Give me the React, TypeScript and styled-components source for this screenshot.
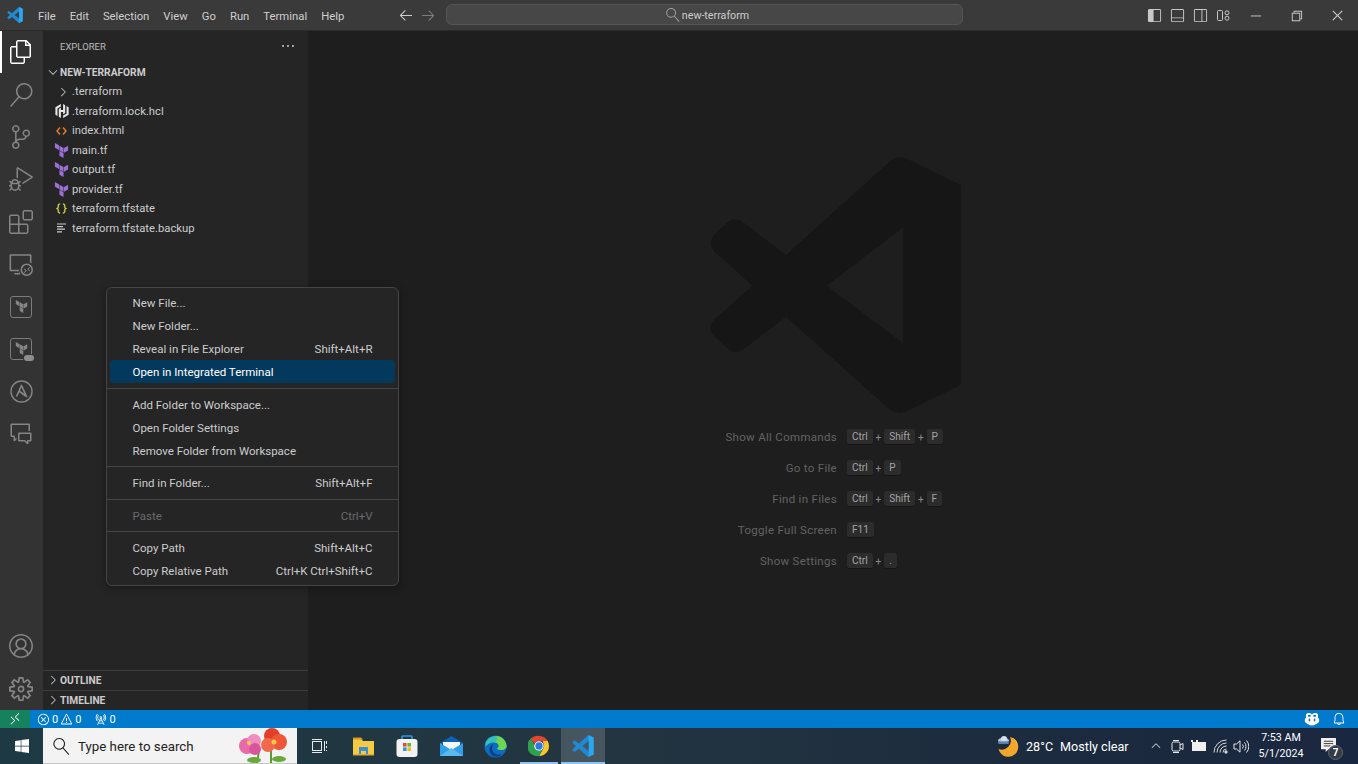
import React from "react";
import styled, { createGlobalStyle } from "styled-components";
import {
  VscFiles, VscSearch, VscSourceControl, VscDebugAlt, VscExtensions, VscRemoteExplorer,
  VscAccount, VscSettingsGear, VscChevronRight, VscChevronDown, VscEllipsis, VscCommentDiscussion,
  VscError, VscWarning, VscRadioTower, VscRemote, VscBell, VscArrowLeft, VscArrowRight,
  VscLayoutSidebarLeft, VscLayoutPanelOff, VscLayoutSidebarRightOff, VscChromeMinimize,
  VscChromeRestore, VscChromeClose, VscJson,
} from "react-icons/vsc";
import { SiTerraform, SiHashicorp } from "react-icons/si";
import { FaWindows } from "react-icons/fa";

const UI = `Roboto, "Noto Sans", sans-serif`;

const Global = createGlobalStyle`
  html, body { margin: 0; height: 100%; background: #1e1e1e; overflow: hidden; }
  * { box-sizing: border-box; }
  #root { height: 100%; }
`;

const Shell = styled.div`
  position: relative;
  width: 1358px;
  height: 764px;
  display: grid;
  grid-template-rows: 31px 679px 18px 36px;
  font-family: ${UI};
  font-size: 11.5px;
  overflow: hidden;
`;

/* ---------- title bar ---------- */
const TitleBar = styled.header`
  display: flex;
  align-items: center;
  background: #3a3a3a;
  border-bottom: 1px solid #2b2b2b;
  color: #cccccc;
`;
const LogoSlot = styled.div`
  width: 38px;
  display: flex;
  justify-content: center;
  padding-right: 8px;
`;
const MenuBar = styled.nav`
  display: flex;
  gap: 14px;
  width: 360px;
  padding-top: 2px;
  font-size: 11.3px;
`;
const MenuLabel = styled.span`
  color: #cfcfcf;
`;
const NavArrows = styled.div`
  display: flex;
  gap: 6px;
  width: 48px;
`;
const NavArrow = styled.span<{ $dim?: boolean }>`
  display: flex;
  font-size: 16px;
  color: ${(p) => (p.$dim ? "#7d7d7d" : "#cccccc")};
`;
const CommandCenter = styled.div`
  width: 517px;
  height: 21px;
  margin-top: -1px;
  padding: 1px 0 0 6px;
  display: flex;
  align-items: center;
  justify-content: center;
  gap: 2px;
  border: 1px solid #555555;
  border-radius: 6px;
  background: #474747;
  font-size: 10.7px;
  color: #cccccc;
  svg { font-size: 14px; color: #a8a8a8; transform: scaleX(-1); }
`;
const TitleActions = styled.div`
  display: flex;
  align-items: center;
  margin-left: auto;
`;
const LayoutBtn = styled.span`
  width: 23px;
  display: flex;
  justify-content: center;
  font-size: 15px;
  color: #c8c8c8;
`;
const WinBtn = styled.span`
  width: 41px;
  display: flex;
  justify-content: center;
  font-size: 15px;
  color: #c8c8c8;
`;
const LayoutGroup = styled.div`
  display: flex;
`;

/* ---------- main ---------- */
const Main = styled.div`
  display: grid;
  grid-template-columns: 43px 265px 1fr;
  min-height: 0;
`;
const ActivityBar = styled.aside`
  display: flex;
  flex-direction: column;
  background: #333333;
`;
const ActivityItem = styled.div<{ $active?: boolean }>`
  height: 42.4px;
  flex: none;
  display: flex;
  align-items: center;
  justify-content: center;
  font-size: 24px;
  padding-right: 3px;
  color: ${(p) => (p.$active ? "#ffffff" : "#858585")};
  border-left: 2px solid ${(p) => (p.$active ? "#ffffff" : "transparent")};
`;
const ActivitySpacer = styled.div`
  flex: 1;
`;
const TerraformBox = styled.div`
  position: relative;
  width: 22px;
  height: 22px;
  display: flex;
  align-items: center;
  justify-content: center;
  border: 1.5px solid #7c7c7c;
  border-radius: 3px;
  font-size: 13px;
`;
const CloudBadge = styled.span`
  position: absolute;
  right: -3px;
  bottom: -2px;
  width: 10px;
  height: 6px;
  border-radius: 4px;
  background: #8e8e8e;
  box-shadow: 0 0 0 1px #333333;
`;

const SideBar = styled.aside`
  display: flex;
  flex-direction: column;
  background: #252526;
  color: #cccccc;
`;
const SideHeader = styled.div`
  height: 30.5px;
  flex: none;
  display: flex;
  align-items: center;
  justify-content: space-between;
  padding: 0 12px 0 17px;
  font-size: 9.5px;
  color: #bbbbbb;
  svg { font-size: 16px; color: #cccccc; }
`;
const FolderRow = styled.div`
  height: 20px;
  flex: none;
  display: flex;
  align-items: center;
  padding: 1px 0 0 3px;
  font-size: 10.2px;
  font-weight: 700;
  svg { font-size: 14px; }
`;
const FileRow = styled.div`
  height: 19.5px;
  flex: none;
  display: flex;
  align-items: center;
  padding: 1px 0 0 8px;
  font-size: 11.25px;
`;
const FileGlyph = styled.span<{ $color: string; $nudge?: boolean }>`
  width: 21px;
  flex: none;
  display: flex;
  justify-content: center;
  color: ${(p) => p.$color};
  padding-left: ${(p) => (p.$nudge ? "3px" : "0")};
`;
const SideSpacer = styled.div`
  flex: 1;
`;
const SectionHeader = styled.div`
  height: 20px;
  flex: none;
  display: flex;
  align-items: center;
  padding: 0 0 1px 3px;
  border-top: 1px solid #3c3c3c;
  font-size: 10.2px;
  font-weight: 700;
  svg { font-size: 14px; }
`;

/* ---------- editor ---------- */
const Editor = styled.main`
  background: #1e1e1e;
  display: flex;
  flex-direction: column;
  padding: 119px 0 0 392px;
`;
const WatermarkLogo = styled.svg`
  width: 270px;
  height: 270px;
  display: block;
  flex: none;
`;
const Shortcuts = styled.div`
  display: grid;
  grid-template-columns: 137px auto;
  grid-auto-rows: 31px;
  column-gap: 10px;
  margin-top: 1.5px;
  justify-content: start;
`;
const ShortcutLabel = styled.div`
  display: flex;
  align-items: center;
  justify-content: flex-end;
  color: #636363;
  letter-spacing: 0.3px;
  white-space: nowrap;
`;
const Keys = styled.div`
  display: flex;
  align-items: center;
  gap: 3px;
  color: #8a8a8a;
  font-size: 10px;
`;
const KeyCap = styled.span`
  height: 16px;
  display: inline-flex;
  align-items: center;
  justify-content: center;
  padding: 0 5px;
  border-radius: 3px;
  background: #2c2c2c;
  border-bottom: 1px solid #151515;
  color: #a6a6a6;
  font-size: 10px;
`;

/* ---------- context menu ---------- */
const ContextMenu = styled.div`
  position: absolute;
  left: 106px;
  top: 287px;
  width: 293px;
  padding: 3px;
  background: #252526;
  border: 1px solid #454545;
  border-radius: 6px;
  box-shadow: 0 2px 8px rgba(0, 0, 0, 0.36);
  color: #cccccc;
`;
const MenuItem = styled.div<{ $active?: boolean; $disabled?: boolean }>`
  height: 23px;
  display: flex;
  align-items: center;
  justify-content: space-between;
  padding: 1px 22.5px 0;
  border-radius: 4px;
  background: ${(p) => (p.$active ? "#04395e" : "transparent")};
  color: ${(p) => (p.$active ? "#ffffff" : p.$disabled ? "#6a6a6a" : "#cccccc")};
`;
const MenuSeparator = styled.div`
  height: 1px;
  margin: 4.6px -3px 4px;
  background: #454545;
`;

/* ---------- status bar ---------- */
const StatusBar = styled.footer`
  display: flex;
  align-items: center;
  background: #007acc;
  color: #ffffff;
  font-size: 11px;
`;
const RemoteSlot = styled.div`
  width: 30px;
  height: 100%;
  display: flex;
  align-items: center;
  justify-content: center;
  background: #16825d;
  font-size: 14px;
`;
const StatusGroup = styled.div`
  display: flex;
  align-items: center;
  gap: 2px;
  margin-left: 7px;
  svg { font-size: 13px; }
  & + & { margin-left: 13px; }
`;
const StatusCount = styled.span`
  margin-right: 0;
`;
const StatusRight = styled.div`
  display: flex;
  align-items: center;
  gap: 12px;
  margin-left: auto;
  padding-right: 12px;
  svg { font-size: 14px; }
`;

/* ---------- taskbar ---------- */
const Taskbar = styled.div`
  display: flex;
  align-items: stretch;
  background: linear-gradient(90deg, #1d3a44 0%, #233541 45%, #1c2b3e 75%, #1a2740 100%);
  color: #ffffff;
`;
const StartBtn = styled.div`
  width: 43px;
  display: flex;
  align-items: center;
  justify-content: center;
  font-size: 16px;
`;
const SearchBox = styled.div`
  position: relative;
  width: 254px;
  display: flex;
  align-items: center;
  gap: 8px;
  padding: 1px 0 0 10px;
  background: #f3f3f3;
  border-bottom: 1px solid #c8c8c8;
  color: #222222;
  font-size: 13.3px;
  overflow: hidden;
  > svg:first-child { font-size: 17px; transform: scaleX(-1); }
`;
const Flowers = styled.svg`
  position: absolute;
  right: 8px;
  top: 0;
`;
const TaskBtn = styled.div<{ $active?: boolean; $open?: boolean }>`
  position: relative;
  width: 44px;
  display: flex;
  align-items: center;
  justify-content: center;
  background: ${(p) => (p.$active ? "rgba(255,255,255,0.16)" : "transparent")};
  &::after {
    content: "";
    display: ${(p) => (p.$open ? "block" : "none")};
    position: absolute;
    left: ${(p) => (p.$active ? "0" : "3px")};
    right: ${(p) => (p.$active ? "0" : "3px")};
    bottom: 0;
    height: 2px;
    background: #8ec4f0;
  }
`;
const Tray = styled.div`
  margin-left: auto;
  display: flex;
  align-items: center;
`;
const WeatherText = styled.div`
  display: flex;
  gap: 7px;
  margin: 0 17px 0 7px;
  font-size: 12.6px;
  white-space: nowrap;
`;
const TrayIcon = styled.span`
  width: 21.3px;
  display: flex;
  justify-content: center;
  font-size: 14px;
  color: #e8e8e8;
`;
const Clock = styled.div`
  width: 58px;
  text-align: center;
  font-size: 10.7px;
  line-height: 16.5px;
`;
const Notify = styled.div`
  position: relative;
  width: 48px;
  height: 100%;
  display: flex;
  align-items: center;
  justify-content: center;
  padding: 0 12px 3px 0;
`;
const NotifyBadge = styled.span`
  position: absolute;
  left: 18px;
  top: 17px;
  width: 15px;
  height: 15px;
  border-radius: 50%;
  display: flex;
  align-items: center;
  justify-content: center;
  background: #333b45;
  border: 1px solid #5f6670;
  font-size: 10px;
  font-weight: 700;
`;

/* ---------- drawings ---------- */
const VS_OUTER =
  "M565 38 Q595 10 628 30 L782 105 L782 705 L628 780 Q595 800 565 775 L258 500 L130 598 Q105 615 85 598 L42 557 Q22 535 42 510 L157 407 L42 303 Q22 280 42 255 L85 215 Q105 198 130 217 L258 315 Z M610 232 L380 407 L610 580 Z";

const VsLogo = ({ size }: { size: number }) => (
  <svg width={size} height={size} viewBox="20 15 770 780">
    <path fillRule="evenodd" d={VS_OUTER} fill="#1f8ad2" />
    <path d="M595 22 Q612 20 628 30 L782 105 L782 705 L628 780 Q612 790 595 790 L610 580 L610 232 Z" fill="#2aa7ef" />
  </svg>
);

const TerraIcon = () => <SiTerraform size={15} />;

const HtmlIcon = () => (
  <svg width="11" height="10" viewBox="0 0 11 10" fill="none" stroke="currentColor" strokeWidth="1.5">
    <path d="M4 1.5 L1 5 L4 8.5M7 1.5 L10 5 L7 8.5" />
  </svg>
);
const LinesIcon = () => (
  <svg width="11" height="10" viewBox="0 0 11 10" fill="none" stroke="currentColor" strokeWidth="1.2">
    <path d="M1 1h9M1 3.6h6M1 6.2h8M1 8.8h5" />
  </svg>
);
const CustomLayoutIcon = () => (
  <svg width="15" height="15" viewBox="0 0 15 15" fill="none" stroke="currentColor" strokeWidth="1">
    <rect x="1.5" y="2.5" width="5" height="10" rx="1" />
    <circle cx="11" cy="4.8" r="2" />
    <circle cx="11" cy="10.2" r="2" />
  </svg>
);
const AnsibleIcon = () => (
  <svg width="23" height="23" viewBox="0 0 23 23" fill="none" stroke="currentColor">
    <circle cx="11.5" cy="11.5" r="10.5" strokeWidth="1.4" />
    <path d="M6.5 16.5 L11.5 5.5 L16.5 16.5 L9 11" strokeWidth="1.7" strokeLinejoin="round" />
  </svg>
);

const TaskView = () => (
  <svg width="17" height="16" viewBox="0 0 17 16" fill="none" stroke="#e8e8e8" strokeWidth="1">
    <rect x="1.5" y="3.5" width="9" height="9" />
    <path d="M1 1.5h10M1 14.5h10M13.5 3v10" />
    <path d="M15.5 3v3M15.5 8v2M15.5 12v1" />
  </svg>
);
const FolderIcon = () => (
  <svg width="21" height="19" viewBox="0 0 21 19">
    <path d="M0 2h8l2 2h11v14H0z" fill="#f6c944" />
    <path d="M0 0.5h8l2 2H0z" fill="#d99a1e" />
    <path d="M6 10h9v8H13v-4H8v4H6z" fill="#3a8fd6" />
    <path d="M0 17h21v1.5H0z" fill="#e2a92c" />
  </svg>
);
const StoreIcon = () => (
  <svg width="22" height="23" viewBox="0 0 22 23">
    <path d="M6 5V2a1 1 0 0 1 1-1h8a1 1 0 0 1 1 1v3" fill="none" stroke="#2b9be8" strokeWidth="1.6" />
    <rect x="0.5" y="4" width="21" height="18" rx="3" fill="#f2f2f2" />
    <rect x="7" y="8" width="3.6" height="3.6" fill="#e8502a" />
    <rect x="11.4" y="8" width="3.6" height="3.6" fill="#6fb52c" />
    <rect x="7" y="12.4" width="3.6" height="3.6" fill="#2b9be8" />
    <rect x="11.4" y="12.4" width="3.6" height="3.6" fill="#f4b81a" />
  </svg>
);
const MailIcon = () => (
  <svg width="23" height="20" viewBox="0 0 23 20">
    <path d="M0 7 L11.5 0 L23 7 L11.5 13z" fill="#0b62b5" />
    <path d="M3 6h17v8H3z" fill="#f4f6f8" />
    <path d="M0 7 L11.5 14 L23 7 V20 H0z" fill="#2f9fe9" />
    <path d="M0 20 L11.5 12 L23 20z" fill="#5bb9f2" />
  </svg>
);
const EdgeIcon = () => (
  <svg width="23" height="23" viewBox="0 0 23 23">
    <circle cx="11.5" cy="11.5" r="11" fill="#0d6cc0" />
    <path d="M1.5 8 C4 1 14 -1.5 19.5 4 C22 6.5 23 10 22.5 12.5 C20 16 14 15.5 13 13.5 C16 12 15 8 11 7.5 C7 7 3.5 8.5 1.5 12z" fill="#35c1b4" />
    <path d="M12 1 C17 1 22 5 22.5 11.5 C22 15 15 16 13 13.5 C16 12 15.5 8 11 7.5 C15 4 13 2 12 1z" fill="#71d54e" />
    <path d="M8 13 C8 18 13 21 18 19 C14 23.5 6 22 5.5 15 C5.5 12 7 9.5 10 9 C8.5 10 8 11.5 8 13z" fill="#0a3f86" />
  </svg>
);
const ChromeIcon = () => (
  <svg width="22" height="22" viewBox="0 0 24 24">
    <path d="M12 1a11 11 0 0 1 9.5 5.5H12a5.5 5.5 0 0 0-5 3.2L3 3.8A11 11 0 0 1 12 1z" fill="#e2462f" />
    <path d="M21.5 6.5A11 11 0 0 1 12 23l4.7-8.3a5.5 5.5 0 0 0 .1-5.7L16 6.5z" fill="#fbc52d" />
    <path d="M3 3.8l4.9 8.6a5.5 5.5 0 0 0 8.8 2.3L12 23A11 11 0 0 1 3 3.8z" fill="#2fa04e" />
    <circle cx="12" cy="12" r="5.2" fill="#fff" />
    <circle cx="12" cy="12" r="4" fill="#2a78e4" />
  </svg>
);
const WeatherIcon = () => (
  <svg width="22" height="22" viewBox="0 0 22 22">
    <path d="M13 2 A10 10 0 1 1 1.5 14 A9 9 0 0 0 13 2z" fill="#f2a62b" />
    <path d="M13 2 A10 10 0 0 1 19 16 A9 9 0 0 0 13 2z" fill="#f8c44a" />
    <ellipse cx="6.5" cy="5.5" rx="5.5" ry="2.8" fill="#b5c8dc" />
    <ellipse cx="7" cy="3.5" rx="3" ry="2.6" fill="#d5e1ec" />
    <rect x="1" y="6.5" width="11" height="2.4" rx="1.2" fill="#5a7fa8" />
  </svg>
);
const MeetIcon = () => (
  <svg width="15" height="15" viewBox="0 0 15 15" fill="none" stroke="#e8e8e8" strokeWidth="1">
    <rect x="2" y="3" width="8" height="9" rx="1.5" />
    <path d="M10 6l3-1.5v6L10 9M3 1.5h6M3 13.5h6" />
  </svg>
);
const BatteryIcon = () => (
  <svg width="16" height="12" viewBox="0 0 16 12">
    <rect x="1.5" y="2.5" width="13" height="8" fill="#efefef" stroke="#efefef" />
    <rect x="0" y="0" width="2" height="2" fill="#efefef" />
    <rect x="5" y="0" width="2" height="2" fill="#efefef" />
  </svg>
);
const WifiIcon = () => (
  <svg width="15" height="15" viewBox="0 0 15 15" fill="none" stroke="#d8d8d8" strokeWidth="1">
    <path d="M1 13.5A12.5 12.5 0 0 1 13.5 1M4 13.5A9.5 9.5 0 0 1 13.5 4M7 13.5A6.5 6.5 0 0 1 13.5 7M10 13.5A3.5 3.5 0 0 1 13.5 10" />
    <circle cx="13" cy="13" r="1.2" fill="#d8d8d8" />
  </svg>
);
const VolumeIcon = () => (
  <svg width="16" height="15" viewBox="0 0 16 15" fill="none" stroke="#e8e8e8" strokeWidth="1">
    <path d="M1 5h2.5L7 1.8v11.4L3.5 10H1z" />
    <path d="M9.5 5.5a3 3 0 0 1 0 4M11.5 3.5a6 6 0 0 1 0 8M13.5 1.5a9 9 0 0 1 0 12" />
  </svg>
);
const NoteIcon = () => (
  <svg width="15" height="14" viewBox="0 0 16 15">
    <path d="M0 0h16v12H8l-3 3v-3H0z" fill="#f2f2f2" />
    <path d="M3 3.5h10M3 6h10M3 8.5h7" stroke="#333" strokeWidth="1" />
  </svg>
);
const CopilotIcon = () => (
  <svg width="16" height="14" viewBox="0 0 16 14">
    <path d="M8 2.5C7 .5 3 .3 2.2 2.2 1.7 3.4 2 5 2.4 5.6 1.2 6 .8 7 .8 8.2c0 1 .3 2 1 2.6C3.4 12.2 5.6 13.4 8 13.4s4.6-1.2 6.2-2.6c.7-.6 1-1.6 1-2.6 0-1.2-.4-2.2-1.6-2.6.4-.6.7-2.2.2-3.4C13 .3 9 .5 8 2.5z" fill="#fff" />
    <rect x="4.6" y="6.6" width="1.6" height="3" rx=".8" fill="#007acc" />
    <rect x="9.8" y="6.6" width="1.6" height="3" rx=".8" fill="#007acc" />
    <path d="M4 3h2.6v1.8H4zM9.4 3H12v1.8H9.4z" fill="#007acc" />
  </svg>
);

/* ---------- data ---------- */
const menuLabels = ["File", "Edit", "Selection", "View", "Go", "Run", "Terminal", "Help"];

const files = [
  { name: ".terraform", icon: <VscChevronRight size={14} />, color: "#cccccc", nudge: true },
  { name: ".terraform.lock.hcl", icon: <SiHashicorp size={14} />, color: "#e6e6e6" },
  { name: "index.html", icon: <HtmlIcon />, color: "#e37933" },
  { name: "main.tf", icon: <TerraIcon />, color: "#9a6fd6" },
  { name: "output.tf", icon: <TerraIcon />, color: "#9a6fd6" },
  { name: "provider.tf", icon: <TerraIcon />, color: "#9a6fd6" },
  { name: "terraform.tfstate", icon: <VscJson size={13} stroke="#d8d84a" strokeWidth={0.7} />, color: "#d8d84a" },
  { name: "terraform.tfstate.backup", icon: <LinesIcon />, color: "#cccccc" },
];

const menuGroups: { label: string; keys?: string; active?: boolean; disabled?: boolean }[][] = [
  [
    { label: "New File..." },
    { label: "New Folder..." },
    { label: "Reveal in File Explorer", keys: "Shift+Alt+R" },
    { label: "Open in Integrated Terminal", active: true },
  ],
  [
    { label: "Add Folder to Workspace..." },
    { label: "Open Folder Settings" },
    { label: "Remove Folder from Workspace" },
  ],
  [{ label: "Find in Folder...", keys: "Shift+Alt+F" }],
  [{ label: "Paste", keys: "Ctrl+V", disabled: true }],
  [
    { label: "Copy Path", keys: "Shift+Alt+C" },
    { label: "Copy Relative Path", keys: "Ctrl+K Ctrl+Shift+C" },
  ],
];

const shortcuts = [
  { label: "Show All Commands", keys: ["Ctrl", "Shift", "P"] },
  { label: "Go to File", keys: ["Ctrl", "P"] },
  { label: "Find in Files", keys: ["Ctrl", "Shift", "F"] },
  { label: "Toggle Full Screen", keys: ["F11"] },
  { label: "Show Settings", keys: ["Ctrl", "."] },
];

export default function App() {
  return (
    <>
      <Global />
      <Shell>
        <TitleBar>
          <LogoSlot><VsLogo size={16} /></LogoSlot>
          <MenuBar>
            {menuLabels.map((m) => <MenuLabel key={m}>{m}</MenuLabel>)}
          </MenuBar>
          <NavArrows>
            <NavArrow><VscArrowLeft /></NavArrow>
            <NavArrow $dim><VscArrowRight /></NavArrow>
          </NavArrows>
          <CommandCenter><VscSearch />new-terraform</CommandCenter>
          <TitleActions>
            <LayoutGroup>
              <LayoutBtn><VscLayoutSidebarLeft /></LayoutBtn>
              <LayoutBtn><VscLayoutPanelOff /></LayoutBtn>
              <LayoutBtn><VscLayoutSidebarRightOff /></LayoutBtn>
              <LayoutBtn><CustomLayoutIcon /></LayoutBtn>
            </LayoutGroup>
            <WinBtn><VscChromeMinimize /></WinBtn>
            <WinBtn><VscChromeRestore /></WinBtn>
            <WinBtn><VscChromeClose /></WinBtn>
          </TitleActions>
        </TitleBar>

        <Main>
          <ActivityBar>
            <ActivityItem $active><VscFiles /></ActivityItem>
            <ActivityItem><VscSearch /></ActivityItem>
            <ActivityItem><VscSourceControl /></ActivityItem>
            <ActivityItem><VscDebugAlt /></ActivityItem>
            <ActivityItem><VscExtensions /></ActivityItem>
            <ActivityItem><VscRemoteExplorer /></ActivityItem>
            <ActivityItem><TerraformBox><SiTerraform /></TerraformBox></ActivityItem>
            <ActivityItem><TerraformBox><SiTerraform /><CloudBadge /></TerraformBox></ActivityItem>
            <ActivityItem><AnsibleIcon /></ActivityItem>
            <ActivityItem><VscCommentDiscussion /></ActivityItem>
            <ActivitySpacer />
            <ActivityItem><VscAccount /></ActivityItem>
            <ActivityItem><VscSettingsGear /></ActivityItem>
          </ActivityBar>

          <SideBar>
            <SideHeader>EXPLORER<VscEllipsis /></SideHeader>
            <FolderRow><VscChevronDown />NEW-TERRAFORM</FolderRow>
            {files.map((f) => (
              <FileRow key={f.name}>
                <FileGlyph $color={f.color} $nudge={f.nudge}>{f.icon}</FileGlyph>
                {f.name}
              </FileRow>
            ))}
            <SideSpacer />
            <SectionHeader><VscChevronRight />OUTLINE</SectionHeader>
            <SectionHeader><VscChevronRight />TIMELINE</SectionHeader>
          </SideBar>

          <Editor>
            <WatermarkLogo viewBox="0 0 810 810">
              <path fillRule="evenodd" d={VS_OUTER} fill="#161616" />
            </WatermarkLogo>
            <Shortcuts>
              {shortcuts.map((s) => (
                <React.Fragment key={s.label}>
                  <ShortcutLabel>{s.label}</ShortcutLabel>
                  <Keys>
                    {s.keys.map((k, i) => (
                      <React.Fragment key={k}>
                        {i > 0 && <span>+</span>}
                        <KeyCap>{k}</KeyCap>
                      </React.Fragment>
                    ))}
                  </Keys>
                </React.Fragment>
              ))}
            </Shortcuts>
          </Editor>
        </Main>

        <StatusBar>
          <RemoteSlot><VscRemote /></RemoteSlot>
          <StatusGroup>
            <VscError /><StatusCount>0</StatusCount>
            <VscWarning /><StatusCount>0</StatusCount>
          </StatusGroup>
          <StatusGroup>
            <VscRadioTower /><StatusCount>0</StatusCount>
          </StatusGroup>
          <StatusRight>
            <CopilotIcon />
            <VscBell />
          </StatusRight>
        </StatusBar>

        <Taskbar>
          <StartBtn><FaWindows /></StartBtn>
          <SearchBox>
            <VscSearch />
            Type here to search
            <Flowers width="54" height="36" viewBox="0 0 54 36">
              <path d="M22 36 L24 22M36 36 L36 20" stroke="#5d9a32" strokeWidth="2" />
              <ellipse cx="19" cy="32" rx="7" ry="3" fill="#6aa83a" />
              <ellipse cx="44" cy="31" rx="7" ry="3" fill="#6aa83a" />
              <circle cx="12" cy="18" r="8" fill="#e96aa8" />
              <circle cx="19" cy="13" r="7" fill="#ef8cc0" />
              <circle cx="20" cy="21" r="6" fill="#d9559a" />
              <circle cx="14" cy="15" r="2" fill="#f4c94a" />
              <circle cx="37" cy="8" r="8" fill="#e23f2a" />
              <circle cx="44" cy="14" r="8" fill="#ef5636" />
              <circle cx="33" cy="17" r="7" fill="#f2694a" />
              <circle cx="39" cy="14" r="2.5" fill="#f4c94a" />
            </Flowers>
          </SearchBox>
          <TaskBtn><TaskView /></TaskBtn>
          <TaskBtn><FolderIcon /></TaskBtn>
          <TaskBtn><StoreIcon /></TaskBtn>
          <TaskBtn><MailIcon /></TaskBtn>
          <TaskBtn><EdgeIcon /></TaskBtn>
          <TaskBtn $open><ChromeIcon /></TaskBtn>
          <TaskBtn $active $open><VsLogo size={22} /></TaskBtn>
          <Tray>
            <WeatherIcon />
            <WeatherText><span>28°C</span><span>Mostly clear</span></WeatherText>
            <TrayIcon><VscChevronDown style={{ transform: "rotate(180deg)" }} /></TrayIcon>
            <TrayIcon><MeetIcon /></TrayIcon>
            <TrayIcon><BatteryIcon /></TrayIcon>
            <TrayIcon><WifiIcon /></TrayIcon>
            <TrayIcon><VolumeIcon /></TrayIcon>
            <Clock>7:53 AM<br />5/1/2024</Clock>
            <Notify><NoteIcon /><NotifyBadge>7</NotifyBadge></Notify>
          </Tray>
        </Taskbar>

        <ContextMenu>
          {menuGroups.map((group, gi) => (
            <React.Fragment key={gi}>
              {gi > 0 && <MenuSeparator />}
              {group.map((it) => (
                <MenuItem key={it.label} $active={it.active} $disabled={it.disabled}>
                  <span>{it.label}</span>
                  {it.keys && <span>{it.keys}</span>}
                </MenuItem>
              ))}
            </React.Fragment>
          ))}
        </ContextMenu>
      </Shell>
    </>
  );
}
